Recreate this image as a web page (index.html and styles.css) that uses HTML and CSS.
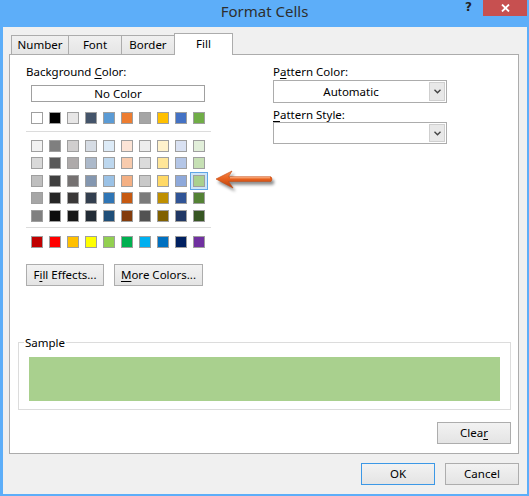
FILE: index.html
```html
<!DOCTYPE html>
<html lang="en">
<head>
    <meta charset="UTF-8">
    <title>Format Cells</title>
    <link rel="stylesheet" href="styles.css">
</head>
<body>
    <div class="window">
        <!-- Barra de título -->
        <div class="titlebar">
            <span></span>
            <span class="title">Format Cells</span>
            <div class="controls">
                <span class="help">?</span>
                <span class="close">
                    <svg width="9" height="8" viewBox="0 0 9 8"><path d="M1 0.5 L8 7.5 M8 0.5 L1 7.5" stroke="#fff" stroke-width="1.8"/></svg>
                </span>
            </div>
        </div>

        <div class="client">
            <div class="tabs">
                <div class="tab tab-number">Number</div>
                <div class="tab tab-font">Font</div>
                <div class="tab tab-border">Border</div>
                <div class="tab active">Fill</div>
            </div>

            <div class="panel">
                <div class="top">
                    <div class="bg-col">
                        <div class="label">Background <u>C</u>olor:</div>
                        <div class="no-color">No Color</div>
                        <div class="swatches theme">
                            <span class="sw" style="background:#ffffff"></span>
                            <span class="sw" style="background:#000000"></span>
                            <span class="sw" style="background:#e7e6e6"></span>
                            <span class="sw" style="background:#44546a"></span>
                            <span class="sw" style="background:#5b9bd5"></span>
                            <span class="sw" style="background:#ed7d31"></span>
                            <span class="sw" style="background:#a5a5a5"></span>
                            <span class="sw" style="background:#ffc000"></span>
                            <span class="sw" style="background:#4472c4"></span>
                            <span class="sw" style="background:#70ad47"></span>
                        </div>
                        <div class="sep"></div>
                        <div class="swatches tints">
                            <span class="sw" style="background:#f2f2f2"></span>
                            <span class="sw" style="background:#7f7f7f"></span>
                            <span class="sw" style="background:#d0cece"></span>
                            <span class="sw" style="background:#d6dce4"></span>
                            <span class="sw" style="background:#ddebf7"></span>
                            <span class="sw" style="background:#fce4d6"></span>
                            <span class="sw" style="background:#ededed"></span>
                            <span class="sw" style="background:#fff2cc"></span>
                            <span class="sw" style="background:#d9e1f2"></span>
                            <span class="sw" style="background:#e2efda"></span>

                            <span class="sw" style="background:#d9d9d9"></span>
                            <span class="sw" style="background:#595959"></span>
                            <span class="sw" style="background:#aeaaaa"></span>
                            <span class="sw" style="background:#acb9ca"></span>
                            <span class="sw" style="background:#bdd7ee"></span>
                            <span class="sw" style="background:#f8cbad"></span>
                            <span class="sw" style="background:#dbdbdb"></span>
                            <span class="sw" style="background:#ffe699"></span>
                            <span class="sw" style="background:#b4c6e7"></span>
                            <span class="sw" style="background:#c6e0b4"></span>

                            <span class="sw" style="background:#bfbfbf"></span>
                            <span class="sw" style="background:#404040"></span>
                            <span class="sw" style="background:#757171"></span>
                            <span class="sw" style="background:#8497b0"></span>
                            <span class="sw" style="background:#9bc2e6"></span>
                            <span class="sw" style="background:#f4b084"></span>
                            <span class="sw" style="background:#c9c9c9"></span>
                            <span class="sw" style="background:#ffd966"></span>
                            <span class="sw" style="background:#8ea9db"></span>
                            <span class="sw selected" style="background:#a9d08e"></span>

                            <span class="sw" style="background:#a6a6a6"></span>
                            <span class="sw" style="background:#262626"></span>
                            <span class="sw" style="background:#3a3838"></span>
                            <span class="sw" style="background:#333f4f"></span>
                            <span class="sw" style="background:#2f75b5"></span>
                            <span class="sw" style="background:#c65911"></span>
                            <span class="sw" style="background:#7b7b7b"></span>
                            <span class="sw" style="background:#bf8f00"></span>
                            <span class="sw" style="background:#305496"></span>
                            <span class="sw" style="background:#548235"></span>

                            <span class="sw" style="background:#808080"></span>
                            <span class="sw" style="background:#0d0d0d"></span>
                            <span class="sw" style="background:#161616"></span>
                            <span class="sw" style="background:#222b35"></span>
                            <span class="sw" style="background:#1f4e78"></span>
                            <span class="sw" style="background:#833c0c"></span>
                            <span class="sw" style="background:#525252"></span>
                            <span class="sw" style="background:#806000"></span>
                            <span class="sw" style="background:#203764"></span>
                            <span class="sw" style="background:#375623"></span>
                        </div>
                        <div class="sep sep2"></div>
                        <div class="swatches standard">
                            <span class="sw" style="background:#c00000"></span>
                            <span class="sw" style="background:#ff0000"></span>
                            <span class="sw" style="background:#ffc000"></span>
                            <span class="sw" style="background:#ffff00"></span>
                            <span class="sw" style="background:#92d050"></span>
                            <span class="sw" style="background:#00b050"></span>
                            <span class="sw" style="background:#00b0f0"></span>
                            <span class="sw" style="background:#0070c0"></span>
                            <span class="sw" style="background:#002060"></span>
                            <span class="sw" style="background:#7030a0"></span>
                        </div>
                        <div class="btn-row">
                            <div class="btn fill-effects">F<u>i</u>ll Effects...</div>
                            <div class="btn more-colors"><u>M</u>ore Colors...</div>
                        </div>
                    </div>

                    <div class="pattern-col">
                        <div class="label">P<u>a</u>ttern Color:</div>
                        <div class="combo">
                            <span class="combo-text">Automatic</span>
                            <span class="combo-arrow">
                                <svg width="7" height="5" viewBox="0 0 7 5"><path d="M0.5 0.8 L3.5 3.8 L6.5 0.8" fill="none" stroke="#444" stroke-width="1.4"/></svg>
                            </span>
                        </div>
                        <div class="label label-style"><u>P</u>attern Style:</div>
                        <div class="combo combo-style">
                            <span class="combo-text"></span>
                            <span class="combo-arrow">
                                <svg width="7" height="5" viewBox="0 0 7 5"><path d="M0.5 0.8 L3.5 3.8 L6.5 0.8" fill="none" stroke="#444" stroke-width="1.4"/></svg>
                            </span>
                        </div>
                    </div>
                </div>

                <fieldset class="sample">
                    <legend>Sample</legend>
                    <div class="sample-fill"></div>
                </fieldset>

                <div class="clear-row">
                    <div class="btn clear">Clea<u>r</u></div>
                </div>

                <!-- seta laranja apontando para a cor escolhida -->
                <svg class="pointer" width="64" height="28" viewBox="0 0 64 28">
                    <defs>
                        <linearGradient id="arrowGrad" x1="0" y1="0" x2="0" y2="1">
                            <stop offset="0" stop-color="#f6874a"/>
                            <stop offset="0.45" stop-color="#e8621f"/>
                            <stop offset="1" stop-color="#b8400c"/>
                        </linearGradient>
                    </defs>
                    <path d="M2 11 L18 3 L14.5 8.8 L57 8.8 Q59 11 57 13.4 L14.5 13.4 L19 20 Z" fill="url(#arrowGrad)" stroke="#c24a12" stroke-width="0.6"/>
                    <path d="M16 9.8 L56 9.8" stroke="#ffb98e" stroke-width="1"/>
                </svg>
            </div>

            <div class="footer">
                <div class="btn ok">OK</div>
                <div class="btn">Cancel</div>
            </div>
        </div>
    </div>
</body>
</html>
```

FILE: styles.css
```css
* {
    margin: 0;
    padding: 0;
    box-sizing: border-box;
}

body {
    font-family: 'Segoe UI', 'Noto Sans', sans-serif;
    font-size: 11px;
    color: #000;
    background: #fff;
}

u {
    text-decoration: underline;
    text-underline-offset: 2px;
}

/* Janela */
.window {
    width: 529px;
    height: 496px;
    background: #5daef9;
    display: flex;
    flex-direction: column;
}

.titlebar {
    height: 27px;
    display: grid;
    grid-template-columns: 1fr auto 1fr;
}

.title {
    font-size: 15px;
    line-height: 18px;
    padding-top: 2px;
    color: #2e2e2e;
}

.controls {
    display: flex;
    justify-content: flex-end;
    align-items: flex-start;
    padding-right: 2px;
}

.help {
    font-family: 'DejaVu Sans', sans-serif;
    font-weight: bold;
    font-size: 12px;
    line-height: 14px;
    color: #222;
    margin-right: 11px;
}

.close {
    width: 44px;
    height: 16px;
    background: #c75050;
    display: flex;
    align-items: center;
    justify-content: center;
}

.client {
    flex: 1;
    margin: 0 2px 2px 3px;
    background: #f0f0f0;
    padding: 6px 8px 0 6px;
}

/* Abas */
.tabs {
    display: flex;
    align-items: flex-start;
    height: 22px;
    margin-bottom: -1px;
    padding-left: 2px;
    position: relative;
    z-index: 1;
}

.tab {
    margin-top: 2px;
    height: 19px;
    border: 1px solid #acacac;
    border-bottom: none;
    background: linear-gradient(to bottom, #f0f0f0, #e5e5e5);
    text-align: center;
    line-height: 18px;
    font-size: 11.5px;
}

.tab-number { width: 58px; }
.tab-font { width: 54px; margin-left: -1px; }
.tab-border { width: 54px; margin-left: -1px; }

.tab.active {
    margin-top: 0;
    height: 22px;
    width: 59px;
    margin-left: -1px;
    background: #fff;
    line-height: 20px;
}

/* Painel */
.panel {
    position: relative;
    height: 400px;
    background: #fff;
    border: 1px solid #acacac;
    padding: 9px 7px 9px 8px;
    display: flex;
    flex-direction: column;
}

.top {
    display: grid;
    grid-template-columns: 185px 174px;
    column-gap: 62px;
    padding-left: 8px;
}

.label {
    line-height: 15px;
    font-size: 11.5px;
}

.no-color {
    margin: 6px 0 0 5px;
    width: 174px;
    height: 17px;
    border: 1px solid #a0a0a0;
    text-align: center;
    line-height: 15px;
    font-size: 11.5px;
}

.swatches {
    display: grid;
    grid-template-columns: repeat(10, 12px);
    column-gap: 6px;
    margin-left: 5px;
}

.theme { margin-top: 10px; }

.tints {
    margin-top: 8px;
    row-gap: 5.4px;
}

.standard { margin-top: 8px; }

.sw {
    display: block;
    width: 12px;
    height: 12px;
    border: 1px solid #9f9f9f;
}

.sw.selected {
    box-shadow: 0 0 0 2px #cde5f8, 0 0 0 3px #5fa6e6;
}

.sep {
    margin-top: 7px;
    height: 1px;
    background: #dcdcdc;
}

.sep2 { margin-top: 5px; }

.btn-row {
    display: flex;
    gap: 10px;
    margin-top: 16px;
}

.btn {
    height: 22px;
    border: 1px solid #adadad;
    background: linear-gradient(to bottom, #f2f2f2, #e4e4e4);
    text-align: center;
    line-height: 20px;
    font-size: 11.5px;
}

.fill-effects { width: 78px; }
.more-colors { width: 89px; }

.combo {
    margin-top: 1px;
    width: 174px;
    height: 23px;
    border: 1px solid #acacac;
    display: flex;
    font-size: 11.5px;
}

.combo-text {
    flex: 1;
    text-align: center;
    line-height: 21px;
}

.combo-arrow {
    width: 16px;
    margin: 1px;
    background: #e8e8e8;
    border: 1px solid #cfcfcf;
    display: flex;
    align-items: center;
    justify-content: center;
}

.label-style { margin-top: 4px; }

.combo-style {
    margin-top: 0;
    height: 22px;
}

/* Amostra */
.sample {
    margin-top: auto;
    border: 1px solid #dcdcdc;
    padding: 7px 10px 8px 10px;
}

.sample legend {
    margin-left: -5px;
    padding: 0 1px;
    line-height: 15px;
    font-size: 11.5px;
}

.sample-fill {
    height: 44px;
    background: #a9d08e;
}

.clear-row {
    display: flex;
    justify-content: flex-end;
    margin-top: 12px;
}

.clear { width: 74px; }

.pointer {
    position: absolute;
    left: 204px;
    top: 113px;
    filter: drop-shadow(2px 3px 1.5px rgba(0, 0, 0, 0.45));
}

/* Rodapé */
.footer {
    display: flex;
    justify-content: flex-end;
    gap: 10px;
    margin-top: 9px;
}

.footer .btn { width: 74px; }

.btn.ok {
    border-color: #3c98e6;
}
```
